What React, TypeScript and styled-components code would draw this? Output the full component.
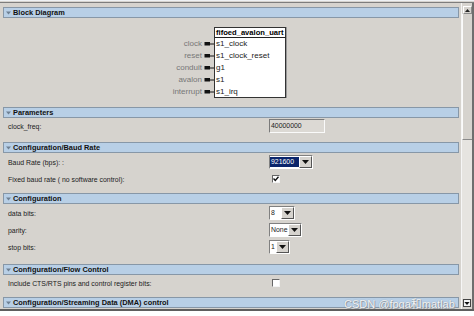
import * as React from 'react'
import styled, { createGlobalStyle } from 'styled-components'

const GlobalStyle = createGlobalStyle`
  html, body {
    margin: 0;
    padding: 0;
    background: #fff;
  }
  body {
    font-family: "Liberation Sans", Arial, sans-serif;
  }
`

interface Port {
  label: string
  name: string
}

const ports: Port[] = [
  { label: 'clock', name: 's1_clock' },
  { label: 'reset', name: 's1_clock_reset' },
  { label: 'conduit', name: 'g1' },
  { label: 'avalon', name: 's1' },
  { label: 'interrupt', name: 's1_irq' },
]

const Collapse = () => (
  <svg width="5" height="4" viewBox="0 0 5 4">
    <path d="M0 0.5 H5 L2.5 3.5 Z" fill="#6f8093" />
  </svg>
)

const Pin = () => (
  <svg width="11" height="12" viewBox="0 0 11 12">
    <rect x="1.5" y="4" width="5.5" height="3.5" fill="#111" />
    <line x1="7" y1="6" x2="11" y2="6" stroke="#111" strokeWidth="1" />
  </svg>
)

const DownArrow = ({ size = 7 }: { size?: number }) => (
  <svg width={size} height={size - 3} viewBox="0 0 7 4">
    <path d="M0 0 H7 L3.5 4 Z" fill="#111" />
  </svg>
)

const Select = ({ value, textWidth, selected }: { value: string; textWidth: number; selected?: boolean }) => (
  <SelectBox>
    <SelectText $width={textWidth} $selected={selected}>{value}</SelectText>
    <SelectButton>
      <DownArrow />
    </SelectButton>
  </SelectBox>
)

const Checkbox = ({ checked }: { checked?: boolean }) => (
  <CheckBox>
    {checked && (
      <svg width="6" height="6" viewBox="0 0 6 6">
        <path d="M0.5 2.5 L2.3 4.5 L5.5 0.8" stroke="#111" strokeWidth="1.4" fill="none" />
      </svg>
    )}
  </CheckBox>
)

const App = () => {
  return (
    <>
      <GlobalStyle />
      <Window>
        <TopEdge />
        <Main>
          <Content>
            <Header>
              <Collapse />
              <span>Block Diagram</span>
            </Header>
            <Body $height={89}>
              <Diagram>
                <span />
                <span />
                <BoxTitle>fifoed_avalon_uart</BoxTitle>
                {ports.map((p, i) => (
                  <React.Fragment key={p.name}>
                    <PortLabel>{p.label}</PortLabel>
                    <Pin />
                    <PortName $last={i === ports.length - 1}>{p.name}</PortName>
                  </React.Fragment>
                ))}
              </Diagram>
            </Body>

            <Header>
              <Collapse />
              <span>Parameters</span>
            </Header>
            <Body $height={24} $top={1}>
              <Row $height={14}>
                <Label>clock_freq:</Label>
                <TextInput>40000000</TextInput>
              </Row>
            </Body>

            <Header>
              <Collapse />
              <span>Configuration/Baud Rate</span>
            </Header>
            <Body $height={40} $top={2} $gap={5}>
              <Row $height={14}>
                <Label>Baud Rate (bps): :</Label>
                <Select value="921600" textWidth={29} selected />
              </Row>
              <Row $height={10}>
                <Label>Fixed baud rate ( no software control):</Label>
                <Checkbox checked />
              </Row>
            </Body>

            <Header>
              <Collapse />
              <span>Configuration</span>
            </Header>
            <Body $height={60} $top={2} $gap={3}>
              <Row $height={14}>
                <Label>data bits:</Label>
                <Select value="8" textWidth={11} />
              </Row>
              <Row $height={14}>
                <Label>parity:</Label>
                <Select value="None" textWidth={18} />
              </Row>
              <Row $height={14}>
                <Label>stop bits:</Label>
                <Select value="1" textWidth={6} />
              </Row>
            </Body>

            <Header>
              <Collapse />
              <span>Configuration/Flow Control</span>
            </Header>
            <Body $height={22} $top={3}>
              <Row $height={10}>
                <Label>Include CTS/RTS pins and control register bits:</Label>
                <Checkbox />
              </Row>
            </Body>

            <Header>
              <Collapse />
              <span>Configuration/Streaming Data (DMA) control</span>
            </Header>

            <Watermark>CSDN @fpga和matlab</Watermark>
          </Content>
          <Scrollbar>
            <ScrollButton>
              <svg width="5" height="3" viewBox="0 0 5 3">
                <path d="M0 3 H5 L2.5 0 Z" fill="#222" />
              </svg>
            </ScrollButton>
            <Thumb />
            <Track />
            <ScrollButton $boxed>
              <DownArrow size={6} />
            </ScrollButton>
          </Scrollbar>
        </Main>
        <BottomEdge />
      </Window>
    </>
  )
}

const Window = styled.div`
  width: 474px;
  height: 316px;
  display: flex;
  flex-direction: column;
  overflow: hidden;
  background: #d6d3ce;
`

const TopEdge = styled.div`
  height: 1px;
  flex: none;
  border-top: 1px solid #eef1f4;
  border-bottom: 1px solid #7d7d7d;
`

const BottomEdge = styled.div`
  height: 5px;
  flex: none;
  border-top: 2px solid #5e5e5e;
  background: #fff;
`

const Main = styled.div`
  flex: 1;
  display: flex;
  min-height: 0;
`

const Content = styled.div`
  flex: 1;
  position: relative;
  overflow: hidden;
  padding: 4px 2px 0 3px;
`

const Header = styled.div`
  height: 9px;
  display: flex;
  align-items: center;
  gap: 2px;
  padding-left: 2px;
  background: #b8cfe6;
  border: 1px solid #8797a7;
  font-size: 7.4px;
  font-weight: bold;
  color: #111;
  white-space: nowrap;
`

const Body = styled.div<{ $height: number; $top?: number; $gap?: number }>`
  height: ${(p) => p.$height}px;
  box-sizing: border-box;
  padding-top: ${(p) => p.$top ?? 0}px;
  display: flex;
  flex-direction: column;
  gap: ${(p) => p.$gap ?? 0}px;
`

const Row = styled.div<{ $height: number }>`
  height: ${(p) => p.$height}px;
  display: grid;
  grid-template-columns: 266px auto;
  align-items: center;
`

const Label = styled.span`
  padding-left: 5px;
  font-size: 6.9px;
  color: #1a1a1a;
  white-space: nowrap;
`

const Diagram = styled.div`
  display: grid;
  grid-template-columns: 60px 11px 72px;
  grid-auto-rows: 12px;
  grid-template-rows: 11px;
  padding: 9px 0 0 140px;
`

const BoxTitle = styled.div`
  box-sizing: border-box;
  border: 1px solid #333;
  border-bottom-color: #222;
  background: #fff;
  font-size: 7.6px;
  font-weight: bold;
  line-height: 9px;
  padding-left: 1px;
  white-space: nowrap;
  overflow: hidden;
  box-shadow: 1px 0 0 #999;
`

const PortLabel = styled.div`
  text-align: right;
  font-size: 8px;
  line-height: 12px;
  color: #777;
  padding-right: 1px;
`

const PortName = styled.div<{ $last?: boolean }>`
  box-sizing: border-box;
  border-left: 1px solid #333;
  border-right: 1px solid #333;
  border-bottom: ${(p) => (p.$last ? '1px solid #333' : 'none')};
  background: #fff;
  font-size: 8px;
  line-height: 12px;
  padding-left: 1px;
  color: #222;
  white-space: nowrap;
  box-shadow: 1px 0 0 #999;
`

const TextInput = styled.div`
  width: 56px;
  height: 14px;
  box-sizing: border-box;
  border: 1px solid;
  border-color: #7a7a7a #fafafa #fafafa #7a7a7a;
  background: #dcd9d4;
  font-size: 6.9px;
  line-height: 12px;
  padding-left: 1px;
  color: #222;
`

const SelectBox = styled.div`
  display: flex;
  width: max-content;
  height: 14px;
  box-sizing: border-box;
  border: 1px solid;
  border-color: #808080 #fff #fff #808080;
  background: #fff;
`

const SelectText = styled.div<{ $width: number; $selected?: boolean }>`
  width: ${(p) => p.$width}px;
  box-sizing: border-box;
  font-size: 6.9px;
  line-height: 10px;
  margin: 1px 0;
  padding-left: 1px;
  background: ${(p) => (p.$selected ? '#0b256b' : '#fff')};
  color: ${(p) => (p.$selected ? '#fff' : '#222')};
`

const SelectButton = styled.div`
  width: 13px;
  box-sizing: border-box;
  display: flex;
  align-items: center;
  justify-content: center;
  background: #d6d3ce;
  border: 1px solid;
  border-color: #fff #555 #555 #fff;
`

const CheckBox = styled.div`
  width: 8px;
  height: 8px;
  margin-left: 3px;
  box-sizing: border-box;
  border: 1px solid;
  border-color: #666 #f4f4f4 #f4f4f4 #666;
  background: #fff;
  display: flex;
  align-items: center;
  justify-content: center;
`

const Scrollbar = styled.div`
  width: 13px;
  flex: none;
  box-sizing: border-box;
  display: flex;
  flex-direction: column;
  align-items: center;
  padding: 3px 0 2px;
  border-left: 1px solid #f6f6f6;
  border-right: 2px solid #6e6e6e;
`

const ScrollButton = styled.div<{ $boxed?: boolean }>`
  width: ${(p) => (p.$boxed ? 8 : 9)}px;
  height: 8px;
  flex: none;
  box-sizing: border-box;
  display: flex;
  align-items: center;
  justify-content: center;
  background: ${(p) => (p.$boxed ? '#f4f4f4' : '#d6d3ce')};
  border: 1px solid;
  border-color: ${(p) => (p.$boxed ? '#444' : '#fff #8a8a8a #8a8a8a #fff')};
`

const Thumb = styled.div`
  width: 10px;
  height: 126px;
  flex: none;
  box-sizing: border-box;
  background: #d6d3ce;
  border-left: 1px solid #fbfbfb;
  border-bottom: 1px solid #8a8a8a;
`

const Track = styled.div`
  width: 10px;
  flex: 1;
  background: #e6e4e0;
`

const Watermark = styled.div`
  position: absolute;
  left: 344px;
  top: 292px;
  font-size: 11px;
  color: rgba(255, 255, 255, 0.9);
  text-shadow: 0 0 1px #7f8a96, 1px 1px 0 #9aa2aa;
  white-space: nowrap;
  font-family: "Liberation Sans", "Noto Sans CJK SC", sans-serif;
`

export default App
